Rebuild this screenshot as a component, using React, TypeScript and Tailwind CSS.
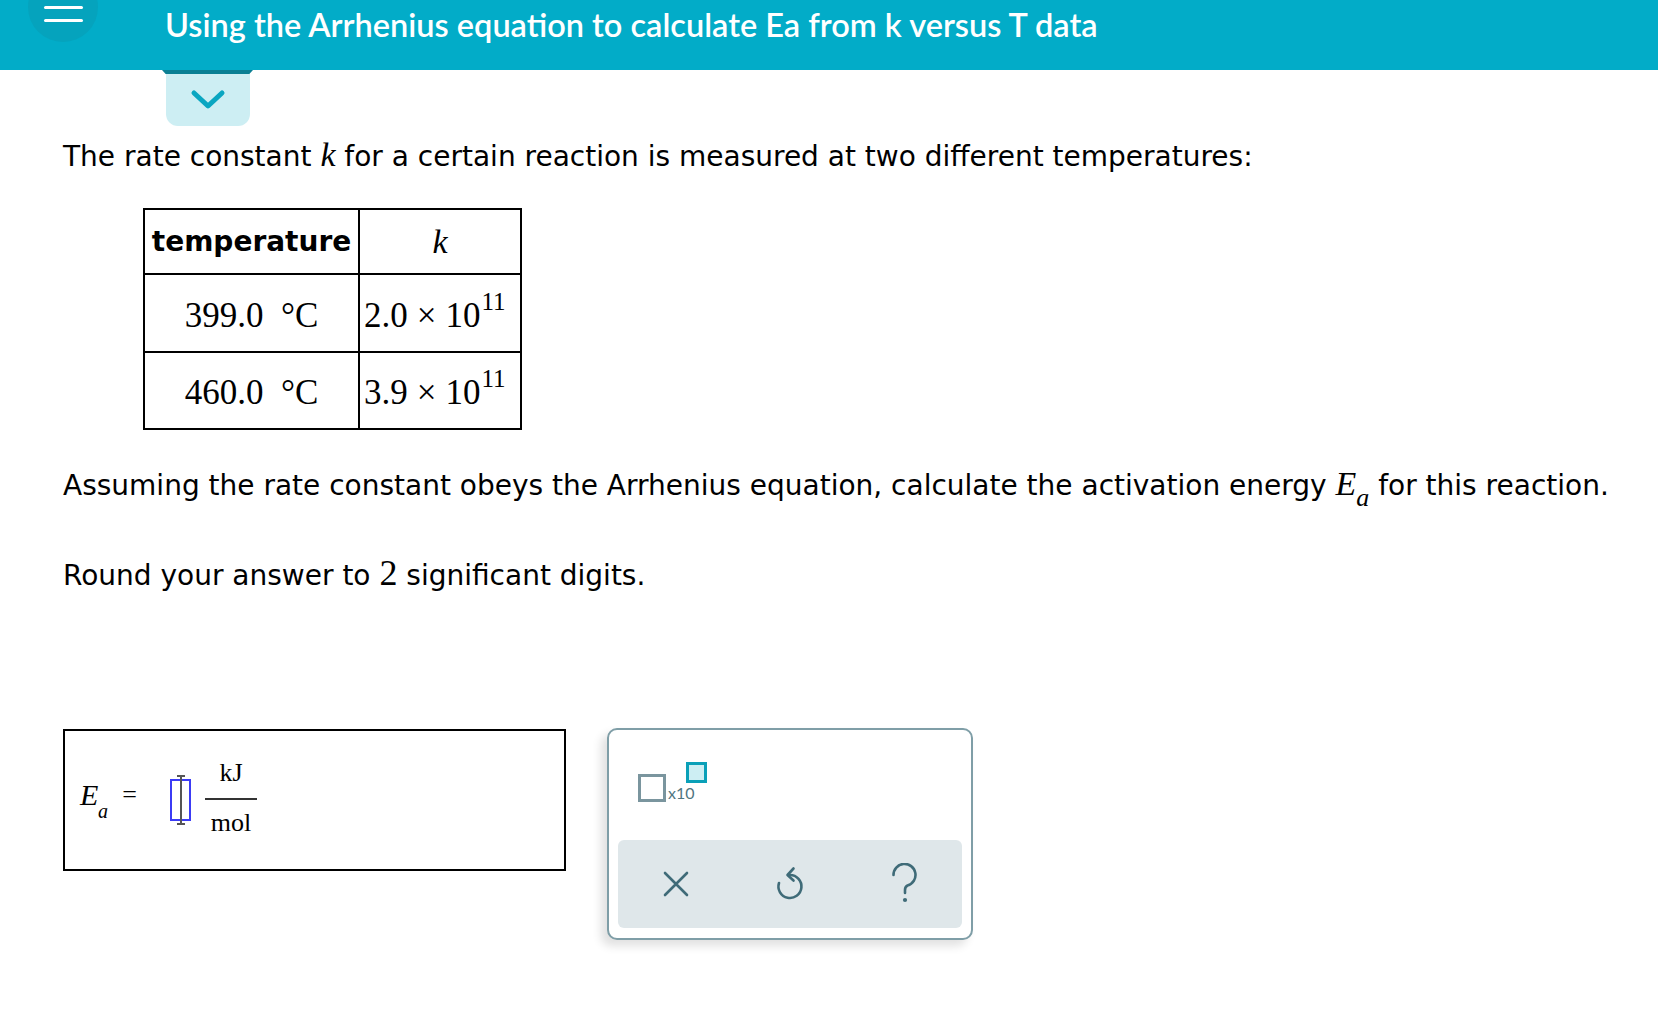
import React from "react";

const sans = { fontFamily: '"DejaVu Sans", Verdana, sans-serif' };
const serif = { fontFamily: '"Liberation Serif", "Times New Roman", serif' };

function Header() {
  return (
    <div className="relative h-[70px] w-full overflow-hidden bg-[#02acc8]">
      <div className="absolute left-[28px] top-[-28px] h-[70px] w-[70px] rounded-full bg-[#05a3bd]">
        <div className="absolute left-[16px] top-[21px] h-[3px] w-[39px] rounded-full bg-white" />
        <div className="absolute left-[16px] top-[34px] h-[3px] w-[39px] rounded-full bg-white" />
        <div className="absolute left-[16px] top-[47px] h-[3px] w-[39px] rounded-full bg-white" />
      </div>
      <div
        className="absolute left-[165px] top-[1px] text-[32.5px] font-semibold text-white"
        style={{ fontFamily: "Lato, 'Open Sans', sans-serif" }}
      >
        Using the Arrhenius equation to calculate Ea from k versus T data
      </div>
    </div>
  );
}

function Tab() {
  return (
    <div className="ml-[162px] flex w-[91px] flex-col items-center">
      <div className="h-[4px] w-[91px] bg-[#0a7f93] [clip-path:polygon(0_0,100%_0,96%_100%,4%_100%)]" />
      <div className="flex h-[52px] w-[84px] items-center justify-center rounded-b-[12px] bg-[#cdeef3]">
        <svg width="36" height="24" viewBox="0 0 36 24">
          <path d="M4 5 L18 18 L32 5" fill="none" stroke="#0aa6c1" strokeWidth="5" strokeLinecap="round" strokeLinejoin="round" />
        </svg>
      </div>
    </div>
  );
}

function Sci({ m }: { m: string }) {
  return (
    <span className="whitespace-nowrap text-[35px] text-black" style={serif}>
      {m}
      <span className="mx-[9px]">×</span>
      10
      <span className="relative top-[-17px] ml-[1px] text-[25px]">11</span>
    </span>
  );
}

function DataTable() {
  return (
    <table className="ml-[80px] mt-[35px] border-collapse">
      <tbody>
        <tr className="h-[65px]">
          <td className="w-[215px] border-2 border-black px-[2px] text-center text-[28px] font-bold text-black" style={sans}>
            temperature
          </td>
          <td className="w-[162px] border-2 border-black text-center text-[34px] italic text-black" style={serif}>
            k
          </td>
        </tr>
        <tr className="h-[78px]">
          <td className="border-2 border-black pt-[6px] text-center text-[35px] text-black" style={serif}>
            399.0&nbsp;&nbsp;°C
          </td>
          <td className="border-2 border-black pl-[4px] pt-[6px] text-left">
            <Sci m="2.0" />
          </td>
        </tr>
        <tr className="h-[77px]">
          <td className="border-2 border-black pt-[6px] text-center text-[35px] text-black" style={serif}>
            460.0&nbsp;&nbsp;°C
          </td>
          <td className="border-2 border-black pl-[4px] pt-[6px] text-left">
            <Sci m="3.9" />
          </td>
        </tr>
      </tbody>
    </table>
  );
}

function AnswerBox() {
  return (
    <div className="flex h-[142px] w-[503px] items-center border-2 border-black pl-[15px]" style={serif}>
      <span className="relative top-[-6px] text-[30px] italic text-black">
        E
        <span className="absolute left-[18px] top-[24px] text-[20px]">a</span>
      </span>
      <span className="relative top-[-6px] ml-[24px] text-[26px] text-black">=</span>
      <div className="relative ml-[33px] h-[42px] w-[21px] border-2 border-[#3b3bf5]">
        <div className="absolute left-[8px] top-[-6px] h-[50px] w-[2px] bg-[#555]" />
        <div className="absolute left-[5px] top-[-6px] h-[2px] w-[8px] bg-[#555]" />
        <div className="absolute bottom-[-6px] left-[5px] h-[2px] w-[8px] bg-[#555]" />
      </div>
      <div className="relative top-[-2px] ml-[14px] flex flex-col items-center text-[26px] leading-[30px] text-black">
        <span className="pb-[10px]">kJ</span>
        <div className="h-[2px] w-[52px] bg-[#333]" />
        <span className="pt-[8px]">mol</span>
      </div>
    </div>
  );
}

function ToolPanel() {
  return (
    <div className="flex h-[212px] w-[366px] flex-col rounded-[10px] border-2 border-[#7f9ea7] bg-white shadow-[-6px_6px_10px_rgba(0,0,0,0.12)]">
      <div className="flex h-[110px] items-start pl-[29px] pt-[32px]">
        <div className="mt-[12px] h-[28px] w-[28px] border-[3px] border-[#7a959e]" />
        <span className="mt-[19px] ml-[2px] text-[16px] text-[#4f7580]" style={{ fontFamily: "Lato, sans-serif" }}>
          x10
        </span>
        <div className="ml-[-9px] h-[21px] w-[21px] border-[3px] border-[#0aa0b8] bg-[#cdeef3]" />
      </div>
      <div className="mx-[9px] flex h-[88px] items-center rounded-[6px] bg-[#dfe7ea] pl-[1px]">
        <div className="flex w-[115px] justify-center">
          <svg width="30" height="30" viewBox="0 0 30 30">
            <path d="M4 4 L26 26 M26 4 L4 26" stroke="#3f6b78" strokeWidth="2.6" strokeLinecap="round" />
          </svg>
        </div>
        <div className="flex w-[115px] justify-center">
          <svg width="32" height="38" viewBox="0 0 32 38">
            <path d="M16 10 A11.5 11.5 0 1 1 5 18" fill="none" stroke="#3f6b78" strokeWidth="2.6" strokeLinecap="round" />
            <path d="M19.5 3.5 L13.5 10 L19.5 15.5" fill="none" stroke="#3f6b78" strokeWidth="2.6" strokeLinecap="round" strokeLinejoin="round" />
          </svg>
        </div>
        <div className="flex w-[115px] justify-center">
          <svg width="30" height="42" viewBox="0 0 30 42">
            <path d="M3.5 12 A11 11 0 1 1 17.5 22.5 C15.5 23.5 15 25 15 27 V30" fill="none" stroke="#3f6b78" strokeWidth="2.6" strokeLinecap="round" />
            <circle cx="15" cy="37" r="2.1" fill="#3f6b78" />
          </svg>
        </div>
      </div>
    </div>
  );
}

export default function App() {
  return (
    <div className="min-h-[1016px] w-full bg-white" style={sans}>
      <Header />
      <Tab />
      <div className="pl-[63px] text-[28px] text-black">
        <p className="mt-[11px] h-[36px] whitespace-nowrap leading-[36px]">
          The rate constant <span className="text-[34px] italic" style={serif}>k</span> for a certain reaction is
          measured at two different temperatures:
        </p>
        <DataTable />
        <p className="mt-[38px] h-[36px] whitespace-nowrap leading-[36px]">
          Assuming the rate constant obeys the Arrhenius equation, calculate the activation energy{" "}
          <span className="relative inline-block leading-[0] text-[34px] italic" style={serif}>
            E<span className="relative top-[11px] text-[26px]">a</span>
          </span>{" "}
          for this reaction.
        </p>
        <p className="mt-[51px] h-[36px] whitespace-nowrap leading-[36px]">
          Round your answer to <span className="text-[36px]" style={serif}>2</span> significant digits.
        </p>
        <div className="mt-[138px] flex items-start gap-[41px]">
          <AnswerBox />
          <div className="mt-[-1px]">
            <ToolPanel />
          </div>
        </div>
      </div>
    </div>
  );
}
